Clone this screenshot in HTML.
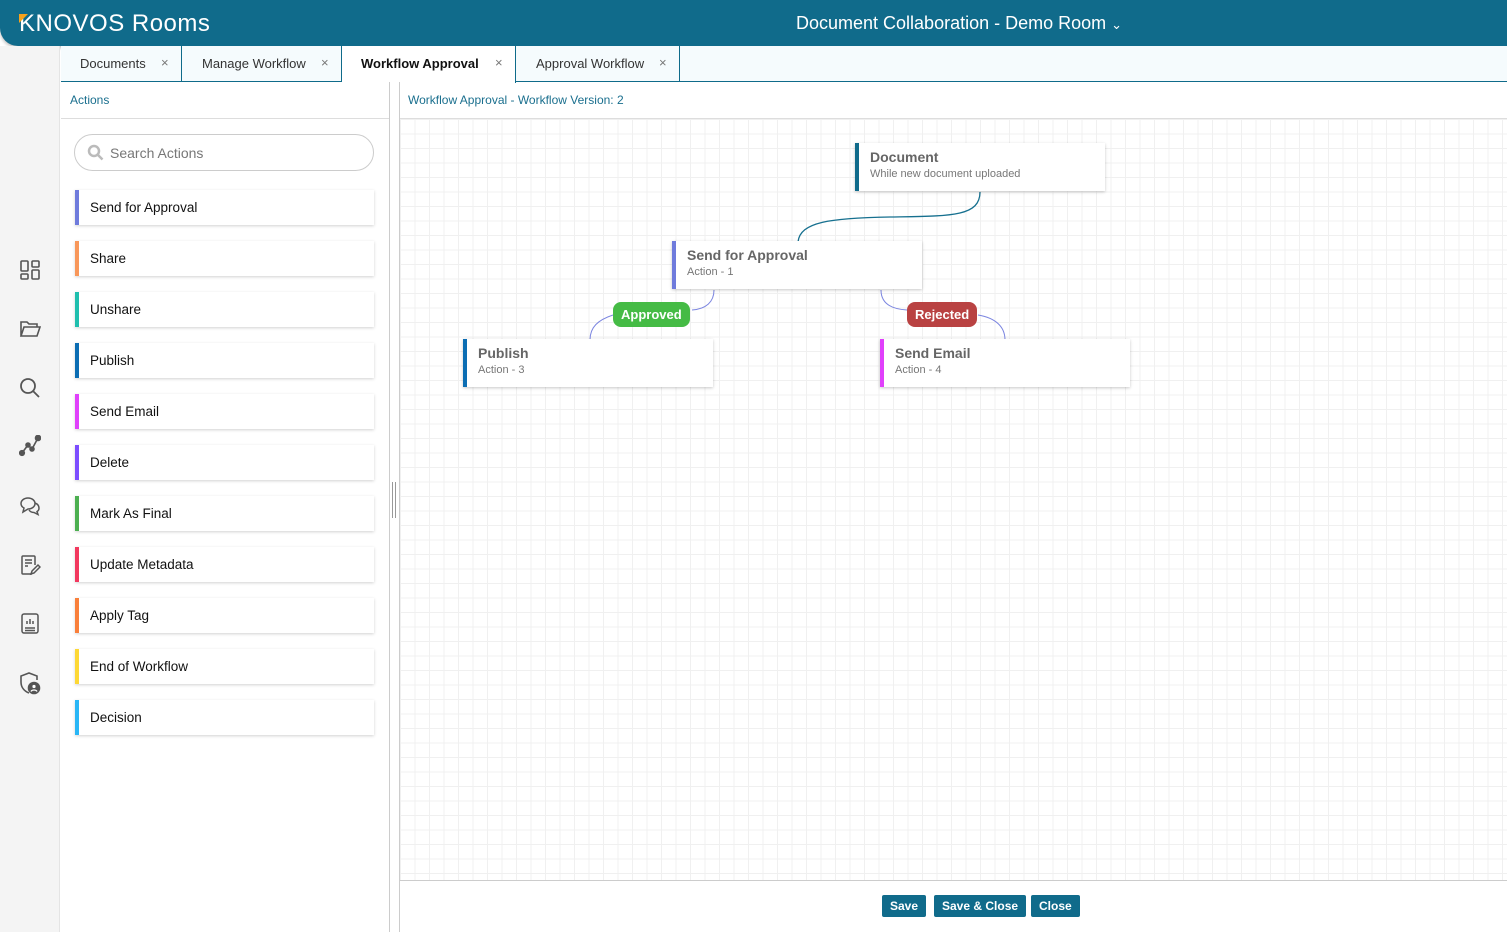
<!DOCTYPE html>
<html><head><style>
*{box-sizing:border-box;margin:0;padding:0}
body{width:1507px;height:932px;overflow:hidden;background:#fff;font-family:"Liberation Sans",sans-serif;position:relative}
.hdr{position:absolute;left:0;top:0;width:1507px;height:46px;background:#106b8b;border-bottom-left-radius:18px;box-shadow:0 2px 3px rgba(0,0,0,.25)}
.logo{position:absolute;left:19px;top:10px;color:#fff;font-size:24px;letter-spacing:.5px}
.title{position:absolute;left:796px;top:13px;color:#fff;font-size:18px}
.side{position:absolute;left:0;top:46px;width:60px;height:886px;background:#f4f4f4;border-right:1px solid #e4e4e4}
.side svg{position:absolute;left:19px}
.tabs{position:absolute;left:61px;top:46px;width:1446px;height:36px;background:#f5fbfd;border-bottom:1px solid #0f6b8a}
.tab{position:absolute;top:0;height:36px;border-right:1px solid #0f6b8a;font-size:13px;color:#333;padding-top:10px}
.tab span{position:absolute;top:9px;color:#777;font-size:13px}
.tab.act{background:#fff;height:37px;font-weight:bold;color:#111}
.left{position:absolute;left:61px;top:82px;width:329px;height:850px;border-right:1px solid #ccc}
.ph{position:absolute;top:0;height:37px;border-bottom:1px solid #ddd;color:#1a6f8e;font-size:12px;padding:11px 9px}
.search{position:absolute;left:13px;top:52px;width:300px;height:37px;border:1px solid #ccc;border-radius:19px;font-size:14px;color:#777;padding:10px 0 0 35px}
.item{position:absolute;left:14px;width:299px;height:35px;background:#fff;box-shadow:0 1px 3px rgba(0,0,0,.18);border-left:4px solid;font-size:13.5px;color:#111;padding:10px 0 0 11px}
.right{position:absolute;left:399px;top:82px;width:1108px;height:850px;border-left:1px solid #ccc}
.canvas{position:absolute;left:0;top:37px;width:1108px;height:762px;background-color:#fff;background-image:linear-gradient(#f0f0f0 1px,transparent 1px),linear-gradient(90deg,#f0f0f0 1px,transparent 1px);background-size:14.5px 14.5px;border-bottom:1px solid #ccc}
.node{position:absolute;width:250px;height:48px;background:#fff;box-shadow:0 1px 3px rgba(0,0,0,.22);border-left:4px solid;padding:6px 0 0 11px}
.node b{display:block;font-size:14px;color:#666}
.node i{display:block;font-style:normal;font-size:11px;color:#777;margin-top:3px}
.pill{position:absolute;height:25px;border-radius:8px;color:#fff;font-weight:bold;font-size:13px;padding:5px 8px}
.btn{position:absolute;top:895px;height:22px;background:#106b8b;color:#fff;font-size:12px;font-weight:bold;border-radius:2px;padding:4px 8px}
</style></head><body>
<div class="hdr"><div class="logo"><span style="position:relative"><span style="position:absolute;left:0;top:4px;width:0;height:0;border-top:9px solid #f7a21b;border-right:9px solid transparent"></span>K</span>NOVOS Rooms</div>
<div class="title">Document Collaboration - Demo Room <span style="font-size:13px">&#8964;</span></div></div>
<div class="side">
<svg style="top:213px" width="22" height="22" viewBox="0 0 22 22" fill="none" stroke="#555" stroke-width="1.6"><rect x="2" y="2" width="7" height="10" rx="1"/><rect x="13" y="2" width="7" height="6" rx="1"/><rect x="2" y="15" width="7" height="5" rx="1"/><rect x="13" y="11" width="7" height="9" rx="1"/></svg>
<svg style="top:272px" width="22" height="22" viewBox="0 0 22 22" fill="none" stroke="#555" stroke-width="1.6"><path d="M2 18V4h6l2 2h8v3M2 18l3-9h16l-3 9z"/></svg>
<svg style="top:331px" width="22" height="22" viewBox="0 0 22 22" fill="none" stroke="#555" stroke-width="1.8"><circle cx="9" cy="9" r="7"/><path d="M14 14l6 6"/></svg>
<svg style="top:389px" width="22" height="22" viewBox="0 0 22 22" fill="#555" stroke="#555" stroke-width="1.6"><circle cx="3" cy="18" r="2.3"/><circle cx="9" cy="10" r="2"/><circle cx="13" cy="14" r="2"/><circle cx="19" cy="3" r="2.5"/><path d="M3 18l6-8 4 4 6-11" fill="none"/></svg>
<svg style="top:449px" width="22" height="22" viewBox="0 0 22 22" fill="none" stroke="#555" stroke-width="1.5"><path d="M9 3c4 0 7 2.5 7 5.5S13 14 9 14l-5 3 1-4C3 12 2 10 2 8.5 2 5.5 5 3 9 3z"/><path d="M16 8c2.5 1 4 3 4 5 0 1.5-1 3-2 3.5l1 3-4-2c-2 0-4-1-5-2.5"/></svg>
<svg style="top:508px" width="22" height="22" viewBox="0 0 22 22" fill="none" stroke="#555" stroke-width="1.5"><path d="M13 20H4a1 1 0 0 1-1-1V3a1 1 0 0 1 1-1h11a1 1 0 0 1 1 1v8M6 6h7M6 9h7M6 12h3"/><path d="M12 20l1-3 6-6 2 2-6 6z"/></svg>
<svg style="top:566px" width="22" height="22" viewBox="0 0 22 22" fill="none" stroke="#555" stroke-width="1.5"><rect x="3" y="2" width="16" height="19" rx="2"/><path d="M6 16h10M6 18.5h10M8 12V9M11 12V7M14 12V9"/></svg>
<svg style="top:625px" width="22" height="24" viewBox="0 0 22 24" fill="none" stroke="#555" stroke-width="1.6"><path d="M10 22C5 20 2 16 2 11V5l8-3 8 3v4"/><circle cx="15" cy="17" r="5.5" fill="#555"/><circle cx="15" cy="15.5" r="1.6" fill="#fff" stroke="none"/><path d="M12 20.5c1-2 5-2 6 0" stroke="#fff" stroke-width="1.3"/></svg>
</div>
<div class="tabs">
<div class="tab" style="left:0;width:121px;padding-left:19px">Documents<span style="left:100px">×</span></div>
<div class="tab" style="left:121px;width:160px;padding-left:20px">Manage Workflow<span style="left:139px">×</span></div>
<div class="tab act" style="left:281px;width:174px;padding-left:19px">Workflow Approval<span style="left:153px;font-weight:normal">×</span></div>
<div class="tab" style="left:455px;width:164px;padding-left:20px">Approval Workflow<span style="left:143px">×</span></div>
</div>
<div class="left">
<div class="ph" style="left:0;width:328px">Actions</div>
<div class="search"><svg style="position:absolute;left:12px;top:9px" width="17" height="17" viewBox="0 0 17 17" fill="none" stroke="#bbb" stroke-width="2.5"><circle cx="7" cy="7" r="5"/><path d="M11 11l4.5 4.5"/></svg>Search Actions</div>
<div class="item" style="top:108px;border-color:#6f7bdc">Send for Approval</div>
<div class="item" style="top:159px;border-color:#f8975a">Share</div>
<div class="item" style="top:210px;border-color:#1fbfae">Unshare</div>
<div class="item" style="top:261px;border-color:#0b6db3">Publish</div>
<div class="item" style="top:312px;border-color:#e040fb">Send Email</div>
<div class="item" style="top:363px;border-color:#7c4dff">Delete</div>
<div class="item" style="top:414px;border-color:#4caf50">Mark As Final</div>
<div class="item" style="top:465px;border-color:#f2385e">Update Metadata</div>
<div class="item" style="top:516px;border-color:#f97f3a">Apply Tag</div>
<div class="item" style="top:567px;border-color:#fdd835">End of Workflow</div>
<div class="item" style="top:618px;border-color:#29b6f6">Decision</div>
</div>
<div style="position:absolute;left:392px;top:482px;width:4px;height:36px;border-left:1px solid #999;border-right:1px solid #999"></div>
<div class="right">
<div class="ph" style="left:0;width:1108px;padding-left:8px">Workflow Approval - Workflow Version: 2</div>
<div class="canvas">
<svg style="position:absolute;left:0;top:0" width="1108" height="300">
<path d="M580 73c0 25-30 24-90 25s-90 5-92 25" fill="none" stroke="#16708f" stroke-width="1.3"/>
<path d="M314 171c0 12-8 19-22 20" fill="none" stroke="#7b85e0" stroke-width="1"/>
<path d="M213 196c-15 5-23 12-23 25" fill="none" stroke="#7b85e0" stroke-width="1"/>
<path d="M481 171c0 12 8 19 26 20" fill="none" stroke="#7b85e0" stroke-width="1"/>
<path d="M578 196c18 3 27 12 27 25" fill="none" stroke="#7b85e0" stroke-width="1"/>
</svg>
<div class="node" style="left:455px;top:24px;border-color:#106b8b"><b>Document</b><i>While new document uploaded</i></div>
<div class="node" style="left:272px;top:122px;border-color:#6f7bdc"><b>Send for Approval</b><i>Action - 1</i></div>
<div class="node" style="left:63px;top:220px;border-color:#0b6db3"><b>Publish</b><i>Action - 3</i></div>
<div class="node" style="left:480px;top:220px;border-color:#e040fb"><b>Send Email</b><i>Action - 4</i></div>
<div class="pill" style="left:213px;top:183px;background:#45bb45">Approved</div>
<div class="pill" style="left:507px;top:183px;background:#b94242">Rejected</div>
</div>
</div>
<div class="btn" style="left:882px">Save</div>
<div class="btn" style="left:934px">Save &amp; Close</div>
<div class="btn" style="left:1031px">Close</div>
</body></html>
